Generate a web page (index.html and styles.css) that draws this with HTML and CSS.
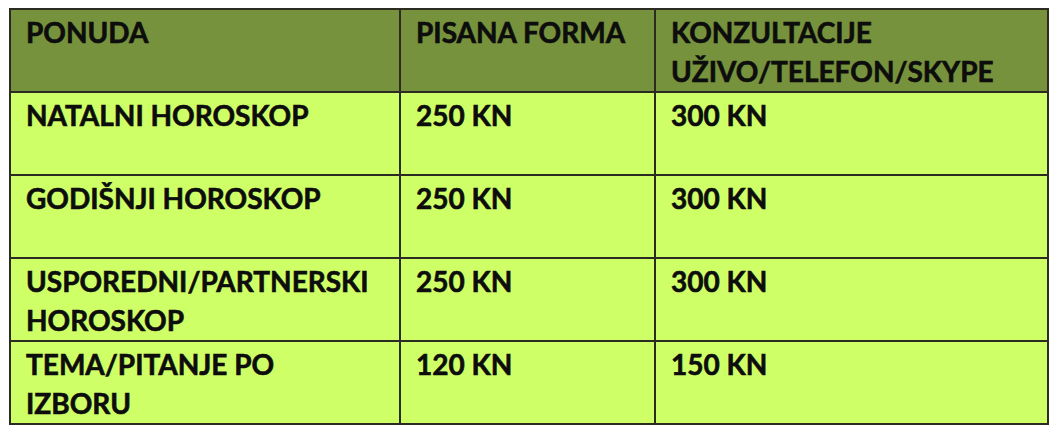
FILE: index.html
```html
<!DOCTYPE html>
<html lang="hr">
<head>
<meta charset="utf-8">
<title>Ponuda</title>
<link rel="stylesheet" href="styles.css">
</head>
<body>
<table class="price-table">
  <colgroup>
    <col class="c1">
    <col class="c2">
    <col class="c3">
  </colgroup>
  <thead>
    <tr>
      <th>PONUDA</th>
      <th>PISANA FORMA</th>
      <th>KONZULTACIJE<br>UŽIVO/TELEFON/SKYPE</th>
    </tr>
  </thead>
  <tbody>
    <tr><td>NATALNI HOROSKOP</td><td>250 KN</td><td>300 KN</td></tr>
    <tr><td>GODIŠNJI HOROSKOP</td><td>250 KN</td><td>300 KN</td></tr>
    <tr><td>USPOREDNI/PARTNERSKI<br>HOROSKOP</td><td>250 KN</td><td>300 KN</td></tr>
    <tr><td>TEMA/PITANJE PO<br>IZBORU</td><td>120 KN</td><td>150 KN</td></tr>
  </tbody>
</table>
</body>
</html>
```
FILE: styles.css
```css
html, body {
  margin: 0;
  padding: 0;
  background: #ffffff;
}
body {
  padding: 8px 0 0 9px;
}
.price-table {
  border-collapse: collapse;
  table-layout: fixed;
  width: 1040px;
  font-family: Lato, "Open Sans", sans-serif;
  font-weight: 700;
  font-size: 28px;
  line-height: 39px;
  color: #0d0d0d;
  -webkit-text-stroke: 0.6px #0d0d0d;
}
.c1 { width: 390px; }
.c2 { width: 255px; }
.c3 { width: 393px; }
.price-table th,
.price-table td {
  border: 2px solid #2b2b22;
  height: 83px;
  padding: 3px 8px 0 15px;
  vertical-align: top;
  text-align: left;
  box-sizing: border-box;
}
.price-table th {
  background: #76923c;
  font-weight: 700;
}
.price-table td {
  background: #cfff66;
}
```
